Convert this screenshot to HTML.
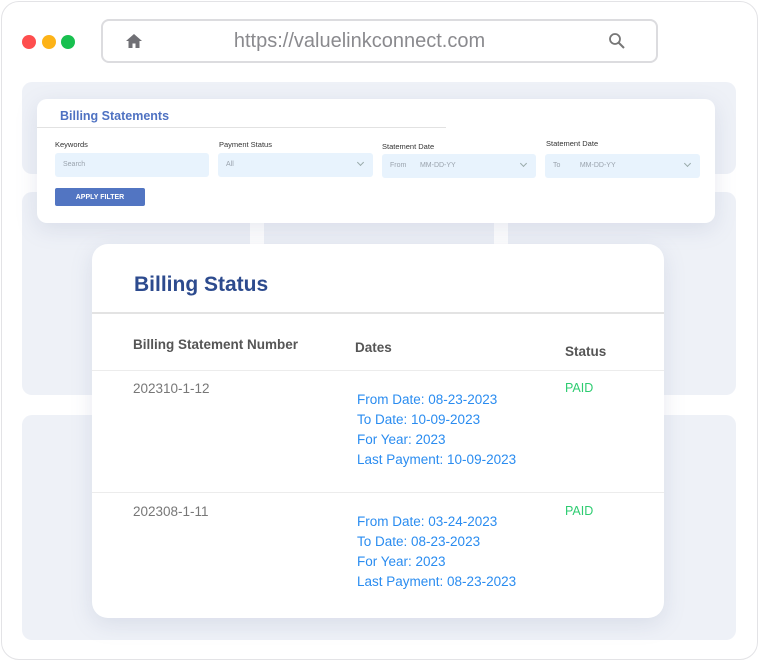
<!DOCTYPE html><html><head><style>
*{box-sizing:border-box;margin:0;padding:0}
body{width:768px;height:666px;background:#fff;font-family:"Liberation Sans",sans-serif;position:relative;overflow:hidden}
.a{position:absolute}
.frame{left:1px;top:1px;width:757px;height:659px;border:1.5px solid #e3e3e6;border-radius:18px;background:#fff}
.bg{background:#eef1f7;border-radius:10px}
.dot{width:14px;height:14px;border-radius:50%;top:35px}
.url{left:101px;top:19px;width:557px;height:44px;border:2px solid #dcdcdf;border-radius:8px;background:#fff;font-size:20px;color:#8a8a8e;text-align:center;line-height:40px;padding-right:40px}
.card{background:#fff;border-radius:10px;box-shadow:0 6px 22px rgba(120,135,170,.18)}
.lbl{font-size:7.5px;color:#333}
.inp{background:#e8f3fd;border-radius:3px;height:24px;font-size:7px;color:#9aa3ad;line-height:24px;padding-left:8px}
.chev{position:absolute;right:10px;top:7px;width:5px;height:5px;border-right:1px solid #9aa;border-bottom:1px solid #9aa;transform:rotate(45deg)}
.h{font-size:13.5px;color:#555;font-weight:bold}
.blue{color:#2a8cf0;font-size:13.5px;line-height:20px}
.num{font-size:13.5px;color:#777}
.paid{font-size:12.5px;color:#2ecc71}
</style></head><body>
<div class="a frame"></div>
<div class="a dot" style="left:22px;background:#fe4e4e"></div>
<div class="a dot" style="left:42px;background:#fdb318"></div>
<div class="a dot" style="left:61px;background:#18c04f"></div>
<div class="a url">https://valuelinkconnect.com</div>
<svg class="a" style="left:125px;top:33px" width="18" height="16" viewBox="0 0 18 16"><path d="M9 1 L1 8 H3.5 V15 H7.5 V10.5 H10.5 V15 H14.5 V8 H17 Z" fill="#707075"/></svg>
<svg class="a" style="left:608px;top:32px" width="18" height="18" viewBox="0 0 18 18"><circle cx="7" cy="7" r="5" fill="none" stroke="#777" stroke-width="1.8"/><path d="M10.5 10.5 L16 16" stroke="#777" stroke-width="2"/></svg>
<div class="a bg" style="left:22px;top:82px;width:714px;height:92px"></div>
<div class="a bg" style="left:22px;top:192px;width:228px;height:203px"></div>
<div class="a bg" style="left:264px;top:192px;width:230px;height:203px"></div>
<div class="a bg" style="left:508px;top:192px;width:228px;height:203px"></div>
<div class="a bg" style="left:22px;top:415px;width:714px;height:225px"></div>
<div class="a card" style="left:37px;top:99px;width:678px;height:124px">
 <div class="a" style="left:23px;top:10px;font-size:12.5px;font-weight:bold;color:#4f72c2">Billing Statements</div>
 <div class="a" style="left:0;top:28px;width:409px;height:1px;background:#e2e2e2"></div>
 <div class="a lbl" style="left:18px;top:41px">Keywords</div>
 <div class="a lbl" style="left:182px;top:41px">Payment Status</div>
 <div class="a lbl" style="left:345px;top:43px">Statement Date</div>
 <div class="a lbl" style="left:509px;top:40px">Statement Date</div>
 <div class="a inp" style="left:18px;top:54px;width:154px">Search</div>
 <div class="a inp" style="left:181px;top:54px;width:155px">All<span class="chev"></span></div>
 <div class="a inp" style="left:345px;top:55px;width:154px">From&nbsp;&nbsp;&nbsp;&nbsp;&nbsp;&nbsp;&nbsp;MM-DD-YY<span class="chev"></span></div>
 <div class="a inp" style="left:508px;top:55px;width:155px">To&nbsp;&nbsp;&nbsp;&nbsp;&nbsp;&nbsp;&nbsp;&nbsp;&nbsp;&nbsp;MM-DD-YY<span class="chev"></span></div>
 <div class="a" style="left:18px;top:89px;width:90px;height:18px;background:#5275c2;border-radius:2px;color:#fff;font-size:7px;font-weight:bold;text-align:center;line-height:18px;padding-top:1px">APPLY FILTER</div>
</div>
<div class="a card" style="left:92px;top:244px;width:572px;height:374px;border-radius:16px">
 <div class="a" style="left:42px;top:29px;font-size:21px;font-weight:bold;color:#2d4b8e">Billing Status</div>
 <div class="a" style="left:0;top:68px;width:572px;height:2px;background:#e3e3e3"></div>
 <div class="a h" style="left:41px;top:93px">Billing Statement Number</div>
 <div class="a h" style="left:263px;top:96px">Dates</div>
 <div class="a h" style="left:473px;top:100px">Status</div>
 <div class="a" style="left:0;top:126px;width:572px;height:1px;background:#ececec"></div>
 <div class="a num" style="left:41px;top:137px">202310-1-12</div>
 <div class="a blue" style="left:265px;top:146px">From Date: 08-23-2023<br>To Date: 10-09-2023<br>For Year: 2023<br>Last Payment: 10-09-2023</div>
 <div class="a paid" style="left:473px;top:137px">PAID</div>
 <div class="a" style="left:0;top:248px;width:572px;height:1px;background:#ececec"></div>
 <div class="a num" style="left:41px;top:260px">202308-1-11</div>
 <div class="a blue" style="left:265px;top:268px">From Date: 03-24-2023<br>To Date: 08-23-2023<br>For Year: 2023<br>Last Payment: 08-23-2023</div>
 <div class="a paid" style="left:473px;top:260px">PAID</div>
</div>
</body></html>
